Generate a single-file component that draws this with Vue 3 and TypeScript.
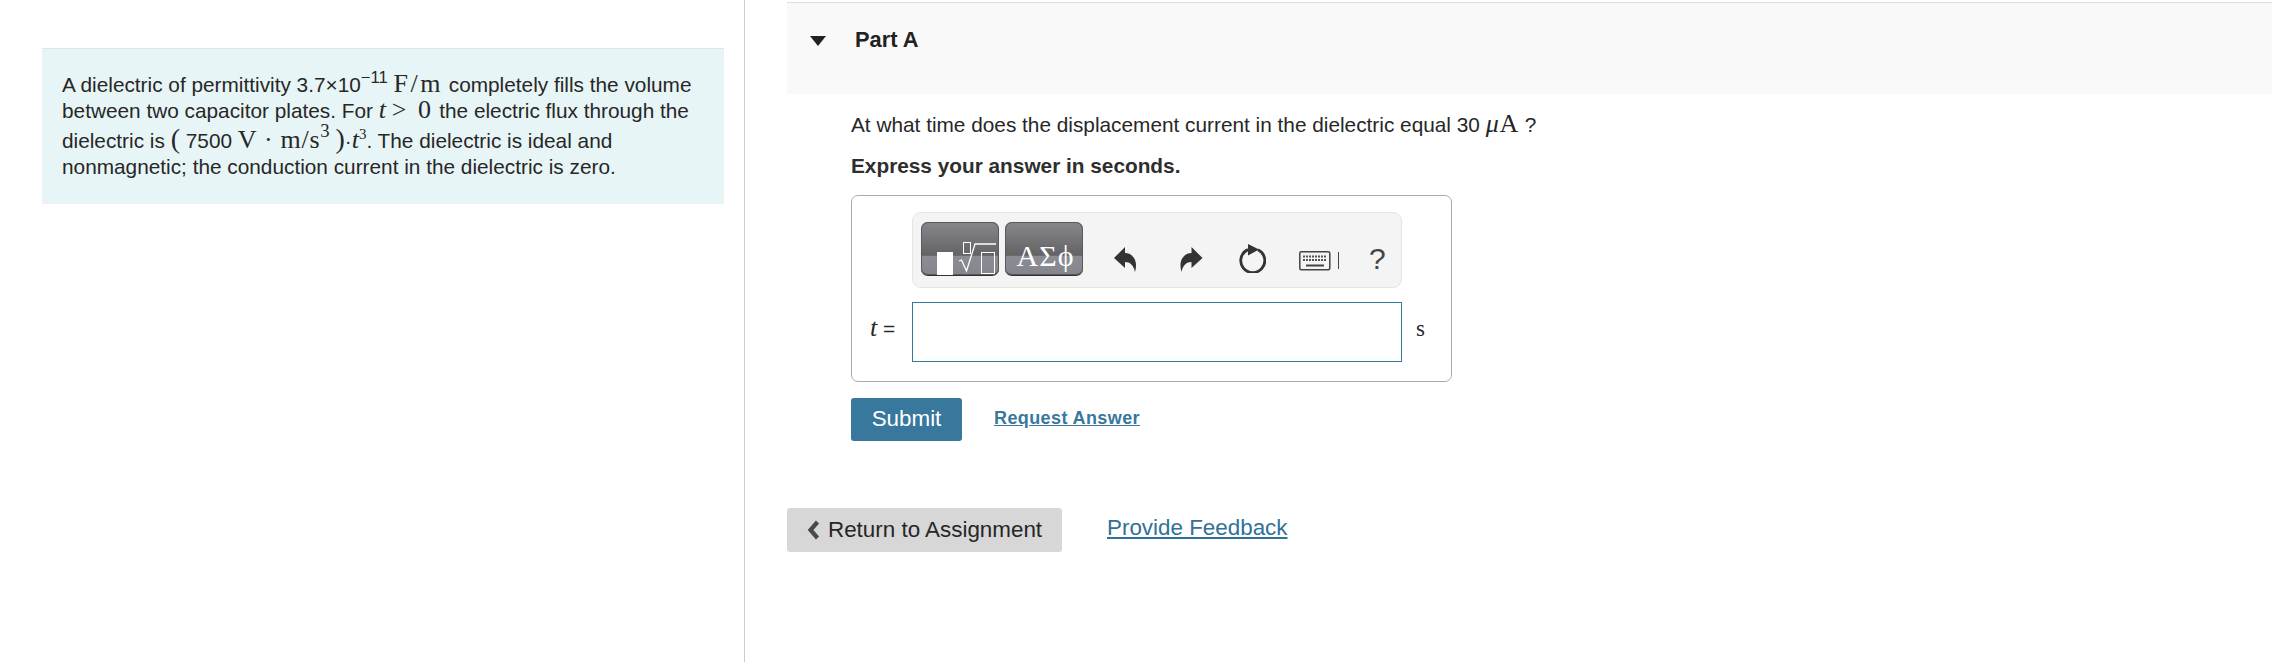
<script setup lang="ts">
const toolbarTitle: string = 'Answer tools'
</script>

<template>
  <div class="page">
    <aside class="left">
      <div class="intro">
        <p>A dielectric of permittivity 3.7×10<sup class="exp">−11</sup> <span class="m wide">F/m</span> completely fills the volume<br />between two capacitor plates. For <i class="m">t</i> <span class="m wide">&gt; 0</span> the electric flux through the<br />dielectric is <span class="paren">(</span> 7500 <span class="m tight">V · m/s<sup class="msup">3</sup></span> <span class="paren sm">)</span>·<i class="m">t</i><sup class="msup m">3</sup>. The dielectric is ideal and<br />nonmagnetic; the conduction current in the dielectric is zero.</p>
      </div>
    </aside>
    <main class="right">
      <header class="part">
        <svg class="tri" width="16" height="10" viewBox="0 0 16 10"><path d="M0 0H16L8 10Z" fill="#222" /></svg>
        <h2>Part A</h2>
      </header>
      <section class="body">
        <p class="q">At what time does the displacement current in the dielectric equal 30 <span class="m tight"><i>μ</i>A</span> ?</p>
        <p class="express">Express your answer in seconds.</p>
        <div class="answer">
          <div class="editor">
            <span class="label"><i class="m">t</i> =</span>
            <div class="fields">
              <div class="toolbar" :aria-label="toolbarTitle">
                <button class="tpl">
                  <svg width="78" height="54" viewBox="0 0 78 54" fill="none" stroke="#fff">
                    <rect x="16" y="30" width="16" height="24" fill="#fff" stroke="none" />
                    <rect x="42.500" y="20.500" width="7" height="11" stroke-width="1" />
                    <path d="M38 39l2.500-1 5 11 8.500-27h21" stroke-width="1.300" />
                    <rect x="60.500" y="30.500" width="13" height="21" stroke-width="1" />
                  </svg>
                </button>
                <button class="tpl greek">ΑΣϕ</button>
                <div class="tools">
                  <svg class="ic" width="22" height="25" viewBox="0 0 22 25"><path d="M0 11 11 0v6c7 0 11 6 11 12 0 3-.5 5-1 7-1.500-7-5-10-10-10v6z" fill="#333" /></svg>
                  <svg class="ic" width="23" height="25" viewBox="0 0 22 25"><path d="M22 11 11 0v6C4 6 0 12 0 18c0 3 .5 5 1 7 1.500-7 5-10 10-10v6z" fill="#333" /></svg>
                  <svg class="ic" width="27" height="29" viewBox="0 0 27 29" fill="none"><path d="M9 5.600A12 12 0 1 0 19 5.800" stroke="#333" stroke-width="2.800" /><path d="M9 0l11 5.500-11 6z" fill="#333" /></svg>
                  <span class="kbd">
                    <svg width="32" height="20" viewBox="0 0 32 20" fill="none">
                      <rect x=".8" y=".8" width="30" height="18" rx="1.500" fill="#f4f4f4" stroke="#444" stroke-width="1.500" />
                      <path d="M4 5.500h24M4 9h24" stroke="#555" stroke-width="2" stroke-dasharray="2 1" />
                      <path d="M7 14.500h18" stroke="#444" stroke-width="2" />
                    </svg>
                    <i class="caret"></i>
                  </span>
                  <span class="help">?</span>
                </div>
              </div>
              <div class="input"></div>
            </div>
            <span class="unit">s</span>
          </div>
        </div>
        <div class="actions">
          <button class="submit">Submit</button>
          <a class="req">Request Answer</a>
        </div>
      </section>
      <footer class="foot">
        <button class="back">
          <svg width="13" height="20" viewBox="0 0 13 20"><path d="M10.500 2 3.500 10l7 8" fill="none" stroke="#4a4a4a" stroke-width="4.200" /></svg>
          Return to Assignment
        </button>
        <a class="fb">Provide Feedback</a>
      </footer>
    </main>
  </div>
</template>

<style>
html, body { margin: 0; background: #fff; }
</style>

<style scoped>
.page { display: flex; width: 2272px; height: 662px; overflow: hidden; font-family: "Liberation Sans", Arial, sans-serif; color: #272727; }
.left { flex: none; border-right: 1px solid #c9ccd3; padding: 48px 20px 0 42px; box-sizing: border-box; width: 745px; }
.intro { background: #e7f5f6; border-top: 1px solid #dfe6e8; height: 156px; box-sizing: border-box; padding: 23px 20px 0; font-size: 20.800px; line-height: 26px; }
.intro p { margin: 0; white-space: nowrap; }
.m { font-family: "Liberation Serif", serif; font-size: 1.250em; line-height: 0; }
.wide { letter-spacing: 2.500px; }
.tight { letter-spacing: .7px; }
.exp { font-size: .8em; line-height: 0; vertical-align: .55em; }
.msup { font-size: .72em; line-height: 0; vertical-align: .6em; letter-spacing: 0; }
.paren { font-size: 1.350em; line-height: 29px; font-weight: 400; font-family: "Liberation Serif", serif; }
.right { flex: 1; padding: 2px 0 0 42px; min-width: 0; }
.part { display: flex; align-items: flex-start; height: 91px; background: #f9f9f9; border-top: 1px solid #dedede; padding-left: 23px; }
.tri { margin-top: 33px; }
h2 { margin: 24px 0 0 29px; font-size: 21.800px; line-height: 26px; font-weight: 700; color: #222; }
.body { padding: 0 0 0 64px; }
.q { margin: 0; padding-top: 16.500px; font-size: 20.800px; line-height: 28px; color: #272727; white-space: nowrap; }
.express { margin: 13px 0 0; font-size: 20.800px; line-height: 28px; font-weight: 700; color: #2e2e2e; }
.answer { width: 601px; height: 187px; margin-top: 15px; border: 1px solid #aaa; border-radius: 7px; box-sizing: border-box; }
.editor { display: flex; align-items: flex-end; }
.label { width: 60px; padding-left: 18px; box-sizing: border-box; margin-bottom: 19px; font-size: 20.800px; line-height: 28px; white-space: nowrap; }
.fields { width: 490px; margin-top: 16px; }
.toolbar { display: flex; align-items: flex-start; height: 76px; box-sizing: border-box; background: #f4f4f4; border: 1px solid #e5e5e5; border-radius: 9px; padding: 9px 0 0 8px; gap: 6px; }
.tpl { width: 78px; height: 54px; padding: 0; border: 0; border-bottom: 1px solid #333; box-sizing: border-box; border-radius: 7px; overflow: hidden; background: linear-gradient(#88888c 0, #636366 63%, #8c8c94 64%, #85858d 100%); display: block; box-shadow: inset 0 0 0 1px #5a5a5e; }
.tpl svg { display: block; }
.greek { font-family: "Liberation Serif", serif; font-size: 30px; line-height: 30px; color: #fff; padding: 16px 0 0 3px; letter-spacing: 1px; }
.tools { display: flex; align-items: center; height: 54px; margin-top: 11px; }
.ic:nth-child(1) { margin-left: 25px; }
.ic:nth-child(2) { margin-left: 44px; }
.ic:nth-child(3) { margin-left: 36px; margin-top: -2px; }
.kbd { display: flex; align-items: center; margin-left: 33px; margin-top: 2px; }
.caret { width: 1px; height: 17px; margin-left: 7px; background: #444; }
.help { margin-left: 30px; font-size: 30px; color: #444; margin-top: -2px; }
.input { height: 60px; margin-top: 14px; border: 1px solid #33789e; box-sizing: border-box; background: #fff; }
.unit { margin: 0 0 19px 14px; font-family: "Liberation Serif", serif; font-size: 23px; line-height: 28px; }
.actions { display: flex; align-items: center; margin-top: 16px; }
.submit { width: 111px; height: 43px; padding: 0; border: 0; border-radius: 3px; background: #37789c; color: #fff; font: 22.400px "Liberation Sans", Arial, sans-serif; }
.req { margin-left: 32px; font-size: 18px; font-weight: 700; color: #37789c; text-decoration: underline; letter-spacing: .4px; margin-top: -2px; }
.foot { display: flex; align-items: center; margin-top: 67px; }
.back { display: flex; align-items: center; gap: 8px; width: 275px; height: 44px; padding: 0 0 0 20px; border: 0; border-radius: 3px; background: #d7d7d7; color: #262626; font: 22.400px "Liberation Sans", Arial, sans-serif; }
.fb { margin-left: 45px; margin-top: -3px; font-size: 22.400px; color: #2f7199; text-decoration: underline; }
</style>
